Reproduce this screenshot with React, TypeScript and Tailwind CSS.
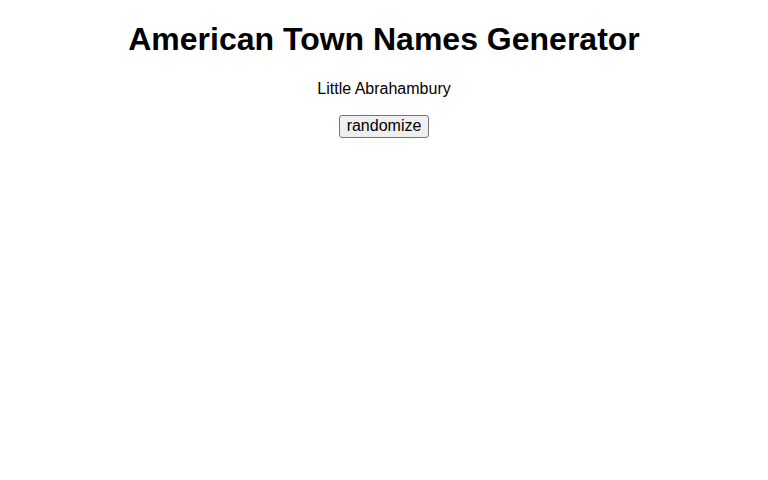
import { useState } from "react";

const names = ["Little Abrahambury", "New Hampton", "Port Jeffersonville", "East Millbrook"];

export default function App() {
  const [i, setI] = useState(0);
  return (
    <div className="min-h-[480px] bg-white text-center text-black" style={{ fontFamily: '"Liberation Sans", Arial, sans-serif' }}>
      <h1 className="m-0 pt-[21.44px] text-[32px] font-bold leading-[36.8px]">American Town Names Generator</h1>
      <p className="mt-[21.44px] text-[16px] leading-[18.4px]">{names[i]}</p>
      <p className="mt-4">
        <button
          onClick={() => setI((i + 1) % names.length)}
          className="h-[23px] rounded-[3px] border border-[#767676] bg-[#efefef] px-[6.5px] py-px text-[16px] leading-[18.4px] text-black"
        >
          randomize
        </button>
      </p>
    </div>
  );
}
